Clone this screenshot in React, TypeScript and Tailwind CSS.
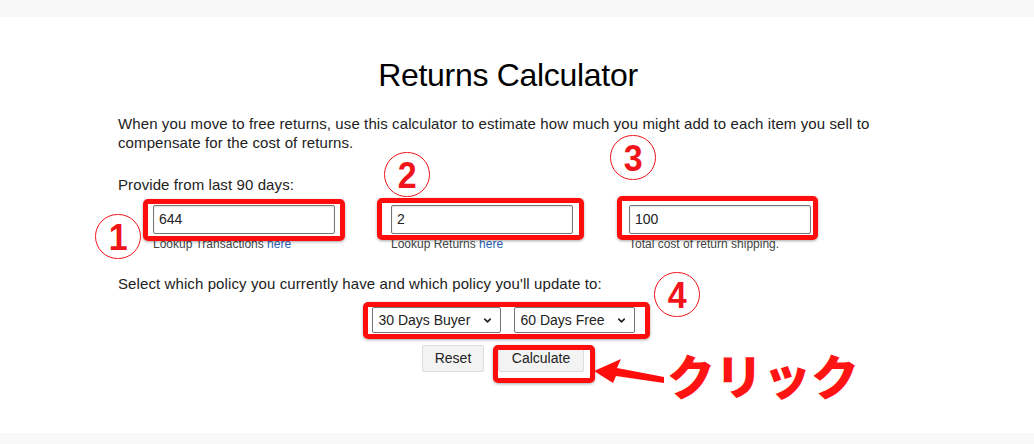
import { ChevronDown } from "lucide-react";

const sans = { fontFamily: '"Liberation Sans", Arial, sans-serif' };

function RedBox({ className }: { className: string }) {
  return (
    <div
      className={`absolute rounded-[5px] border-[5px] border-[#ff0d0d] shadow-[0_1px_3px_rgba(0,0,0,0.35)] ${className}`}
    />
  );
}

function Circled({ n, className }: { n: string; className: string }) {
  return (
    <div
      className={`absolute flex h-[45px] w-[46px] items-center justify-center rounded-full border-[1.5px] border-[#f0141b] text-[37px] font-bold leading-none text-[#f0141b] ${className}`}
      style={sans}
    >
      <span className="mt-[1px] scale-x-[0.92]">{n}</span>
    </div>
  );
}

function Field({ value, label }: { value: string; label: React.ReactNode }) {
  return (
    <div className="w-[182px]">
      <div className="flex h-[29px] items-center rounded-[2px] border border-[#767676] bg-white px-[5px] text-[14px] text-[#222] shadow-[inset_0_1px_2px_rgba(0,0,0,0.12)]">
        {value}
      </div>
      <div className="mt-[3px] text-[12px] leading-[14px] text-[#444]">{label}</div>
    </div>
  );
}

function Select({ value, width }: { value: string; width: string }) {
  return (
    <div
      className={`flex h-[26px] items-center justify-between rounded-[2px] border border-[#767676] bg-white pl-[6px] pr-[7px] text-[14px] text-[#222] ${width}`}
    >
      <span>{value}</span>
      <ChevronDown className="h-[11px] w-[11px]" strokeWidth={3.5} />
    </div>
  );
}

export default function App() {
  return (
    <div className="relative flex h-[444px] w-full flex-col overflow-hidden bg-white text-[#222]" style={sans}>
      <div className="h-[17px] bg-[#f8f8f8]" />

      <div className="ml-[118px] w-[770px] flex-1">
        <h1 className="mt-[38px] pl-[10px] text-center text-[32px] leading-[40px] tracking-[-0.3px] text-black">
          Returns Calculator
        </h1>

        <p className="mt-[19px] text-[15px] leading-[19px] tracking-[0.1px]">
          When you move to free returns, use this calculator to estimate how much you might add to each item you sell to
          compensate for the cost of returns.
        </p>

        <p className="mt-[23px] text-[15px] leading-[19px] tracking-[0.1px]">Provide from last 90 days:</p>

        <div className="mt-[11px] flex gap-[56px] pl-[35px]">
          <Field
            value="644"
            label={
              <>
                Lookup Transactions <span className="text-[#2a5db0]">here</span>
              </>
            }
          />
          <Field
            value="2"
            label={
              <>
                Lookup Returns <span className="text-[#2a5db0]">here</span>
              </>
            }
          />
          <Field value="100" label="Total cost of return shipping." />
        </div>

        <p className="mt-[23px] text-[15px] leading-[19px] tracking-[0.1px]">
          Select which policy you currently have and which policy you'll update to:
        </p>

        <div className="mt-[14px] flex justify-center gap-[13px]">
          <Select value="30 Days Buyer" width="w-[129px]" />
          <Select value="60 Days Free" width="w-[121px]" />
        </div>

        <div className="mt-[12px] flex justify-center gap-[14px]">
          <button className="h-[27px] w-[62px] rounded-[2px] border border-[#dcdcdc] bg-[#f3f3f3] text-[14px] text-[#222]">
            Reset
          </button>
          <button className="h-[27px] w-[86px] rounded-[2px] border border-[#dcdcdc] bg-[#f3f3f3] text-[14px] text-[#222]">
            Calculate
          </button>
        </div>
      </div>

      <div className="h-[11px] bg-[#f8f8f8]" />

      {/* annotations */}
      <RedBox className="left-[143px] top-[199px] h-[42px] w-[202px]" />
      <RedBox className="left-[377px] top-[198px] h-[42px] w-[207px]" />
      <RedBox className="left-[617px] top-[196px] h-[44px] w-[201px]" />
      <RedBox className="left-[363px] top-[302px] h-[37px] w-[287px]" />
      <RedBox className="left-[493px] top-[345px] h-[38px] w-[102px]" />

      <Circled n="1" className="left-[95px] top-[214px]" />
      <Circled n="2" className="left-[384px] top-[152px]" />
      <Circled n="3" className="left-[610px] top-[135px] h-[41px] w-[44px]" />
      <Circled n="4" className="left-[654px] top-[272px]" />

      <svg className="absolute left-[590px] top-[355px]" width="80" height="35" viewBox="0 0 80 35">
        <polygon points="4,16 31,4 27,13 74,22 74,28 26,21 23,28" fill="#ff0d0d" />
      </svg>

      <div
        className="absolute left-[667px] top-[346px] text-[48px] font-black leading-[56px] text-[#ff1414]"
        style={{ fontFamily: '"Noto Sans CJK JP", sans-serif' }}
      >
        クリック
      </div>
    </div>
  );
}
